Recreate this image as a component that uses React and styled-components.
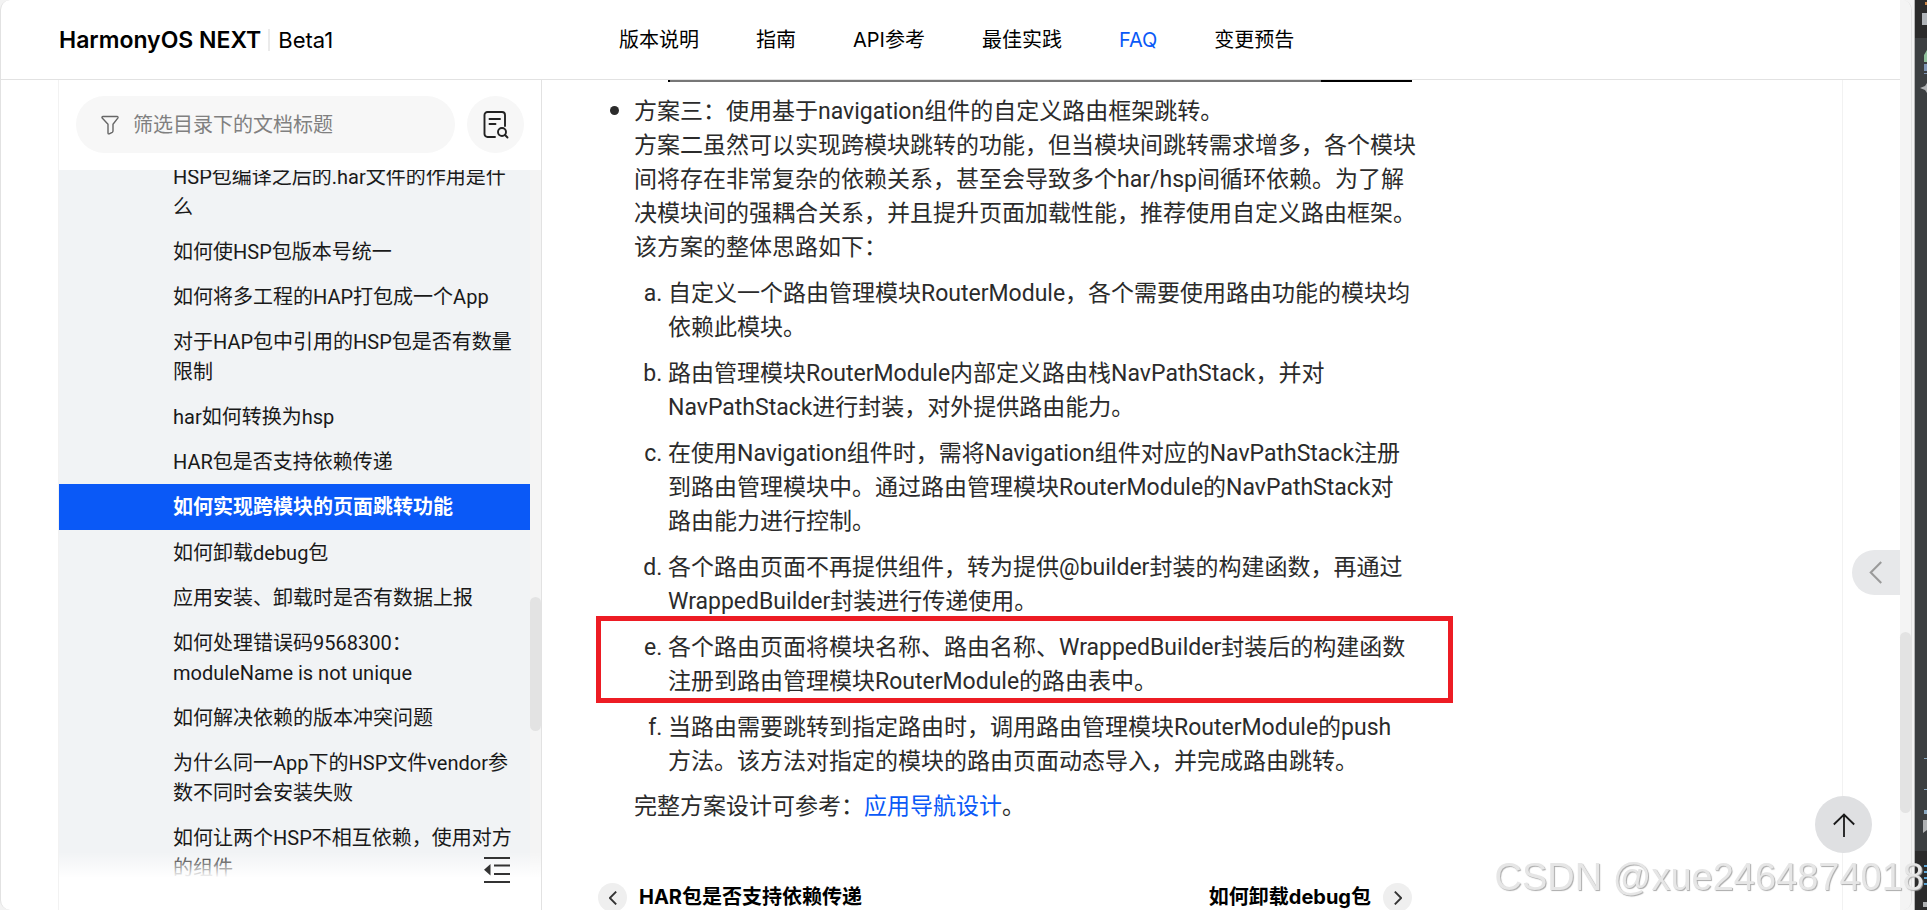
import React, { useState } from "react";
import styled, { createGlobalStyle } from "styled-components";

const GlobalStyle = createGlobalStyle`
  * {
    box-sizing: border-box;
  }
  body {
    margin: 0;
    overflow: hidden;
    background: #f3f3f3;
    color: #000;
    font-family: Roboto, "Noto Sans CJK SC", sans-serif;
    font-size: 20px;
  }
  button,
  input {
    font: inherit;
  }
  button {
    padding: 0;
    border: none;
    cursor: pointer;
  }
  a {
    color: inherit;
    text-decoration: none;
  }
`;

const Desktop = styled.div`
  display: flex;
  height: 100vh;
  overflow: hidden;
`;

const BrowserWindow = styled.div`
  display: flex;
  flex: 1;
  min-width: 0;
  margin-right: 2px;
  border: 1px solid #e2e2e2;
  border-width: 0 1px;
  border-radius: 10px;
  background: #fff;
  overflow: hidden;
`;

const Page = styled.div`
  display: flex;
  flex-direction: column;
  flex: 1;
  min-width: 0;
`;

const Track = styled.div`
  flex: none;
  width: 11px;
  background: #f4f4f4;
`;

const Thumb = styled.div`
  height: ${({ size }) => size}px;
  margin-top: ${({ offset }) => offset}px;
  border-radius: 6px;
  background: #e3e3e3;
`;

const EditorStrip = styled.div`
  flex: none;
  width: 13px;
  border-left: 1px solid #b4b4b4;
  background: #3c3f41;
  overflow: hidden;
`;

const Header = styled.header`
  display: grid;
  grid-template-columns: 560px 1fr;
  align-items: center;
  flex: none;
  height: 80px;
  padding-left: 58px;
  border-bottom: 1px solid #e2e2e2;
  font-family: Inter, "Noto Sans CJK SC", sans-serif;
  line-height: 28px;
`;

const Brand = styled.a`
  display: flex;
  align-items: center;
`;

const BrandName = styled.strong`
  padding-right: 7px;
  border-right: 2px solid #ebebeb;
  font-size: 23px;
  font-weight: 600;
  line-height: 22px;
`;

const BrandVersion = styled.span`
  padding-left: 8px;
  font-size: 22px;
`;

const Nav = styled.nav`
  display: flex;
  align-items: baseline;
  gap: 57px;
`;

const NavLink = styled.a`
  color: ${({ $active }) => ($active ? "#0a59f7" : "#000")};
`;

const Body = styled.div`
  display: flex;
  flex: 1;
  min-height: 0;
  margin: 0 57px;
  border: 1px solid #f2f2f2;
  border-width: 0 1px;
`;

const Sidebar = styled.aside`
  display: flex;
  flex-direction: column;
  position: relative;
  flex: none;
  width: 483px;
  border-right: 1px solid #e2e2e2;
`;

const FilterBar = styled.div`
  display: flex;
  gap: 12px;
  flex: none;
  padding: 16px 17px 17px;
`;

const FilterBox = styled.label`
  display: flex;
  align-items: center;
  gap: 14px;
  flex: 1;
  height: 57px;
  padding: 0 25px;
  border-radius: 29px;
  background: #f7f7f7;
`;

const FilterInput = styled.input`
  flex: 1;
  min-width: 0;
  padding: 0;
  border: none;
  outline: none;
  background: transparent;
  &::placeholder {
    color: #808080;
    opacity: 1;
  }
`;

const SearchButton = styled.button`
  display: flex;
  align-items: center;
  justify-content: center;
  width: 57px;
  height: 57px;
  border-radius: 50%;
  background: #f7f7f7;
`;

const TreeArea = styled.div`
  display: flex;
  flex: 1;
  min-height: 0;
  background: #f1f3f5;
  overflow: hidden;
`;

const Tree = styled.ul`
  flex: 1;
  min-width: 0;
  margin: -16px 0 0;
  padding: 0;
  list-style: none;
`;

const TreeLink = styled.a`
  display: block;
  padding: ${({ $active }) => ($active ? "8px" : "8px 8px 7px")};
  padding-left: 114px;
  line-height: 30px;
  color: ${({ $active }) => ($active ? "#fff" : "#191919")};
  background: ${({ $active }) => ($active ? "#0a59f7" : "transparent")};
  font-weight: ${({ $active }) => ($active ? 700 : 400)};
`;

const TreeFade = styled.div`
  position: absolute;
  left: 0;
  right: 0;
  bottom: 0;
  display: flex;
  justify-content: flex-end;
  height: 58px;
  padding: 4px 31px 0;
  background: linear-gradient(rgba(255, 255, 255, 0), #fff 26px);
`;

const CollapseButton = styled.button`
  width: 26px;
  height: 28px;
  background: transparent;
`;

const Main = styled.main`
  flex: 1;
  min-width: 0;
  padding-left: 56px;
`;

const Article = styled.article`
  max-width: 814px;
  color: #2b2b2b;
  font-size: 23px;
  line-height: 34px;
`;

const FigureEdge = styled.div`
  height: 2px;
  margin-left: 70px;
  border-left: 2px solid #000;
  border-right: 91px solid #000;
  background: #777;
`;

const Solutions = styled.ul`
  margin: 11px -4px 0 0;
  padding-left: 36px;
`;

const Solution = styled.li`
  &::marker {
    font-size: 28px;
  }
`;

const Steps = styled.ol`
  display: flex;
  flex-direction: column;
  gap: 12px;
  margin: 12px 4px 11px 0;
  padding-left: 34px;
  list-style: lower-alpha;
`;

const Step = styled.li`
  position: relative;
`;

const Marked = styled.span`
  position: absolute;
  top: -15px;
  right: -41px;
  bottom: -4px;
  left: -72px;
  border: 5px solid #ed1c24;
  pointer-events: none;
`;

const DocLink = styled.a`
  color: #0a59f7;
`;

const Pager = styled.nav`
  display: flex;
  justify-content: space-between;
  max-width: 814px;
  margin-top: 59px;
  font-family: Inter, "Noto Sans CJK SC", sans-serif;
`;

const PagerLink = styled.a`
  display: flex;
  align-items: center;
  gap: 12px;
  line-height: 29px;
  font-weight: 700;
`;

const PagerIcon = styled.span`
  display: flex;
  align-items: center;
  justify-content: center;
  width: 29px;
  height: 29px;
  border-radius: 50%;
  background: #efefef;
`;

const DrawerToggle = styled.button`
  position: fixed;
  top: 550px;
  right: 27px;
  display: flex;
  align-items: center;
  width: 48px;
  height: 45px;
  padding-left: 17px;
  border-radius: 23px 0 0 23px;
  background: #e7e8ea;
`;

const BackToTop = styled.button`
  position: fixed;
  right: 55px;
  bottom: 57px;
  display: flex;
  align-items: center;
  justify-content: center;
  width: 57px;
  height: 57px;
  border-radius: 50%;
  background: #dfe0e2;
`;

const Watermark = styled.div`
  position: fixed;
  right: 3px;
  bottom: 13px;
  color: #e6e6e6;
  font-family: "Liberation Sans", Arial, sans-serif;
  font-size: 38px;
  line-height: 40px;
  text-shadow: 1px 1px 1px #aaa;
  white-space: nowrap;
  pointer-events: none;
`;

const navItems = ["版本说明", "指南", "API参考", "最佳实践", "FAQ", "变更预告"];

const treeItems = [
  "HSP包编译之后的.har文件的作用是什么",
  "如何使HSP包版本号统一",
  "如何将多工程的HAP打包成一个App",
  "对于HAP包中引用的HSP包是否有数量限制",
  "har如何转换为hsp",
  "HAR包是否支持依赖传递",
  "如何实现跨模块的页面跳转功能",
  "如何卸载debug包",
  "应用安装、卸载时是否有数据上报",
  "如何处理错误码9568300：moduleName is not unique",
  "如何解决依赖的版本冲突问题",
  "为什么同一App下的HSP文件vendor参数不同时会安装失败",
  "如何让两个HSP不相互依赖，使用对方的组件",
];

const steps = [
  { text: "自定义一个路由管理模块RouterModule，各个需要使用路由功能的模块均依赖此模块。" },
  { text: "路由管理模块RouterModule内部定义路由栈NavPathStack，并对NavPathStack进行封装，对外提供路由能力。" },
  { text: "在使用Navigation组件时，需将Navigation组件对应的NavPathStack注册到路由管理模块中。通过路由管理模块RouterModule的NavPathStack对路由能力进行控制。" },
  { text: "各个路由页面不再提供组件，转为提供@builder封装的构建函数，再通过WrappedBuilder封装进行传递使用。" },
  { text: "各个路由页面将模块名称、路由名称、WrappedBuilder封装后的构建函数注册到路由管理模块RouterModule的路由表中。", marked: true },
  { text: "当路由需要跳转到指定路由时，调用路由管理模块RouterModule的push方法。该方法对指定的模块的路由页面动态导入，并完成路由跳转。" },
];

function FilterIcon() {
  return (
    <svg width="18" height="20" viewBox="0 0 18 20" fill="none" stroke="#666" strokeWidth="1.4" strokeLinejoin="round">
      <path d="M2 1.500h14c1 0 1.300.9.800 1.600L12 9.300v6.700c0 .6-.3 1-.8 1.300l-3 1.500c-.7.300-1.200 0-1.200-.7V9.300L1.200 3.100C.7 2.400 1 1.500 2 1.500z" />
    </svg>
  );
}

function DocSearchIcon() {
  return (
    <svg width="26" height="28" viewBox="0 0 26 28" fill="none" stroke="#222" strokeWidth="1.9" strokeLinecap="round">
      <path d="M12 26H4.500a3 3 0 0 1-3-3V4a3 3 0 0 1 3-3h14.500a3 3 0 0 1 3 3v11" />
      <path d="M6.500 8h10.500M6.500 13h6" />
      <circle cx="19" cy="21" r="4" />
      <path d="M22 24l2.500 2.500" />
    </svg>
  );
}

function CollapseIcon() {
  return (
    <svg width="26" height="28" viewBox="0 0 26 28" stroke="#333" strokeWidth="2">
      <path d="M0 2h26M10 9.500h16M10 18h16M0 26h26" />
      <path d="M0 13.700L6.500 8v11.500z" fill="#333" stroke="none" />
    </svg>
  );
}

function Chevron({ width, height, left, color, stroke = 2 }) {
  return (
    <svg width={width} height={height} viewBox="0 0 12 22" fill="none" stroke={color} strokeWidth={stroke}>
      <path d={left ? "M11 1L1 11l10 10" : "M1 1l10 10L1 21"} />
    </svg>
  );
}

function ArrowUpIcon() {
  return (
    <svg width="22" height="24" viewBox="0 0 22 24" fill="none" stroke="#1a1a1a" strokeWidth="1.8">
      <path d="M11 24V1.500M.8 11.500L11 1.500l10.200 10" />
    </svg>
  );
}

function EditorIcons() {
  return (
    <svg width="12" height="910" viewBox="0 0 12 910">
      <path d="M0 0h12v38H0zM0 851h12v59H0z" fill="#2b2b2b" />
      <path d="M7 13h5v12H7z" fill="#b0b4b8" />
      <path d="M10 2h2v3h-2z" fill="#d08a4a" />
      <path d="M9 55l3-5v12H9z" fill="#8fbf9a" />
      <path d="M9 64h3v7H9zM9 73h3v1H9z" fill="#7f95b5" />
      <path d="M5 88l5-2 2-3v10l-2-3z" fill="#afb1b3" />
      <path d="M9 758h3v1H9zM9 789h3v1H9zM9 810h3v4H9z" fill="#8aa8c0" />
      <path d="M8 820h4v10l-4 3z" fill="#afb1b3" />
      <path d="M9 865h3v2H9zM9 871h3v2H9zM9 877h3v2H9zM9 883h3v2H9z" fill="#5fa8d8" />
      <path d="M8 902h4v5H8z" fill="#afb1b3" />
    </svg>
  );
}

function Catalog() {
  const [keyword, setKeyword] = useState("");
  const [current, setCurrent] = useState("如何实现跨模块的页面跳转功能");

  return (
    <Sidebar>
      <FilterBar>
        <FilterBox>
          <FilterIcon />
          <FilterInput
            aria-label="筛选目录下的文档标题"
            placeholder="筛选目录下的文档标题"
            value={keyword}
            onChange={(e) => setKeyword(e.target.value)}
          />
        </FilterBox>
        <SearchButton aria-label="搜索">
          <DocSearchIcon />
        </SearchButton>
      </FilterBar>
      <TreeArea>
        <Tree>
          {treeItems
            .filter((item) => item.includes(keyword))
            .map((item) => (
              <li key={item}>
                <TreeLink href="#" $active={item === current} onClick={() => setCurrent(item)}>
                  {item}
                </TreeLink>
              </li>
            ))}
        </Tree>
        <Track>
          <Thumb offset={427} size={134} />
        </Track>
      </TreeArea>
      <TreeFade>
        <CollapseButton aria-label="收起">
          <CollapseIcon />
        </CollapseButton>
      </TreeFade>
    </Sidebar>
  );
}

function App() {
  return (
    <Desktop>
      <GlobalStyle />
      <BrowserWindow>
        <Page>
          <Header>
            <Brand href="#">
              <BrandName>HarmonyOS NEXT</BrandName>
              <BrandVersion>Beta1</BrandVersion>
            </Brand>
            <Nav>
              {navItems.map((item) => (
                <NavLink key={item} href="#" $active={item === "FAQ"}>
                  {item}
                </NavLink>
              ))}
            </Nav>
          </Header>
          <Body>
            <Catalog />
            <Main>
              <Article>
                <FigureEdge />
                <Solutions>
                  <Solution>
                    方案三：使用基于navigation组件的自定义路由框架跳转。
                    <br />
                    方案二虽然可以实现跨模块跳转的功能，但当模块间跳转需求增多，各个模块间将存在非常复杂的依赖关系，甚至会导致多个har/hsp间循环依赖。为了解决模块间的强耦合关系，并且提升页面加载性能，推荐使用自定义路由框架。
                    <br />
                    该方案的整体思路如下：
                    <Steps>
                      {steps.map(({ text, marked }) => (
                        <Step key={text}>
                          {text}
                          {marked && <Marked />}
                        </Step>
                      ))}
                    </Steps>
                    完整方案设计可参考：<DocLink href="#">应用导航设计</DocLink>。
                  </Solution>
                </Solutions>
              </Article>
              <Pager>
                <PagerLink href="#">
                  <PagerIcon>
                    <Chevron width={8} height={14} left color="#333" stroke={3} />
                  </PagerIcon>
                  HAR包是否支持依赖传递
                </PagerLink>
                <PagerLink href="#">
                  如何卸载debug包
                  <PagerIcon>
                    <Chevron width={8} height={14} color="#333" stroke={3} />
                  </PagerIcon>
                </PagerLink>
              </Pager>
            </Main>
          </Body>
        </Page>
        <Track>
          <Thumb offset={632} size={181} />
        </Track>
      </BrowserWindow>
      <EditorStrip>
        <EditorIcons />
      </EditorStrip>
      <DrawerToggle aria-label="展开">
        <Chevron width={14} height={23} left color="#9a9a9a" />
      </DrawerToggle>
      <BackToTop aria-label="回到顶部">
        <ArrowUpIcon />
      </BackToTop>
      <Watermark>CSDN @xue2464874018</Watermark>
    </Desktop>
  );
}

export default App;
